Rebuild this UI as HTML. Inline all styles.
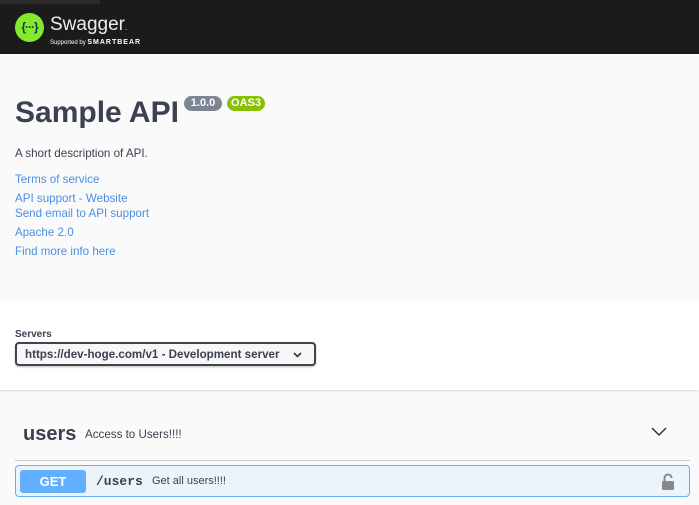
<!DOCTYPE html>
<html><head><meta charset="utf-8"><style>
*{margin:0;padding:0;box-sizing:border-box}
body{width:699px;height:505px;overflow:hidden;background:#fafafa;font-family:"Liberation Sans",Arial,sans-serif;position:relative}
.hdr{position:absolute;left:0;top:0;width:699px;height:54px;background:#1b1b1b}
.strip{position:absolute;left:0;top:0;width:100px;height:4px;background:#2a2a2a}
.logo{position:absolute;left:15px;top:13px;width:29px;height:29px;border-radius:50%;background:#85ea2d;color:#173647;font-size:12px;font-weight:bold;text-align:center;line-height:29px;letter-spacing:-1px}
.sw{position:absolute;left:50px;top:14px;color:#eee;font-size:19px}
.sb{position:absolute;left:50px;top:39px;color:#fff;font-size:6px}
.sb b{font-size:7px;letter-spacing:1px}
h1{position:absolute;left:15px;top:96px;font-size:30px;color:#3b4151;font-weight:bold}
.badge{position:absolute;top:96px;height:15px;border-radius:8px;color:#fff;font-size:11px;font-weight:bold;line-height:15px;text-align:center}
.t{position:absolute;left:15px;font-size:11.6px}
a{color:#4990e2;text-decoration:none}
.srv{position:absolute;left:0;top:300px;width:699px;height:90px;background:#fff;box-shadow:0 1px 2px rgba(0,0,0,.15)}
.lbl{position:absolute;left:15px;top:29px;font-size:10px;color:#3b4151;font-weight:bold}
.sel{position:absolute;left:15px;top:42px;width:301px;height:24px;border:2px solid #41444e;border-radius:4px;background:#f7f7f7;box-shadow:0 1px 2px rgba(0,0,0,.25);font-size:11.6px;font-weight:bold;color:#3b4151;padding:4px 8px}
.users{position:absolute;left:23px;top:423px;font-size:20px;font-weight:bold;color:#3b4151}
.acc{position:absolute;left:85px;top:428px;font-size:11.6px;color:#3b4151}
.line{position:absolute;left:15px;top:460px;width:675px;height:1px;background:#ccc}
.op{position:absolute;left:15px;top:465px;width:675px;height:32px;border:1px solid #61affe;border-radius:4px;background:#ebf3fb}
.get{position:absolute;left:4px;top:4px;width:66px;height:23px;background:#61affe;border-radius:3px;color:#fff;font-weight:bold;font-size:13px;text-align:center;line-height:23px}
.path{position:absolute;left:80px;top:8px;font-family:"Liberation Mono",monospace;font-weight:bold;font-size:13px;color:#3b4151}
.sum{position:absolute;left:136px;top:9px;font-size:11px;color:#3b4151}
</style></head><body>
<div class="hdr"><div class="strip"></div><div class="logo">{···}</div><div class="sw">Swagger<span style="font-size:8px">.</span></div><div class="sb">Supported by <b>SMARTBEAR</b></div></div>
<h1>Sample API</h1>
<div class="badge" style="left:184px;width:38px;background:#7d8492">1.0.0</div>
<div class="badge" style="left:227px;width:38px;background:#89bf04">OAS3</div>
<div class="t" style="top:147px;color:#3b4151">A short description of API.</div>
<div class="t" style="top:173px"><a>Terms of service</a></div>
<div class="t" style="top:192px"><a>API support - Website</a></div>
<div class="t" style="top:207px"><a>Send email to API support</a></div>
<div class="t" style="top:226px"><a>Apache 2.0</a></div>
<div class="t" style="top:245px"><a>Find more info here</a></div>
<div class="srv"><div class="lbl">Servers</div><div class="sel">https://dev-hoge.com/v1 - Development server
<svg style="position:absolute;right:12px;top:8px" width="9" height="6" viewBox="0 0 9 6"><path d="M1 1l3.5 3.5L8 1" stroke="#333" stroke-width="1.6" fill="none"/></svg></div></div>
<div class="users">users</div><div class="acc">Access to Users!!!!</div>
<svg style="position:absolute;left:651px;top:427px" width="16" height="10" viewBox="0 0 16 10"><path d="M1 1l7 7 7-7" stroke="#333" stroke-width="1.5" fill="none"/></svg>
<div class="line"></div>
<div class="op"><div class="get">GET</div><div class="path">/users</div><div class="sum">Get all users!!!!</div>
<svg style="position:absolute;left:645px;top:7px" width="14" height="18" viewBox="0 0 14 18"><path d="M3.5 8V5a3.5 3.5 0 0 1 7 0" stroke="#888" stroke-width="2" fill="none"/><rect x="1" y="8" width="12" height="9" rx="1.5" fill="#888"/></svg></div>
</body></html>
